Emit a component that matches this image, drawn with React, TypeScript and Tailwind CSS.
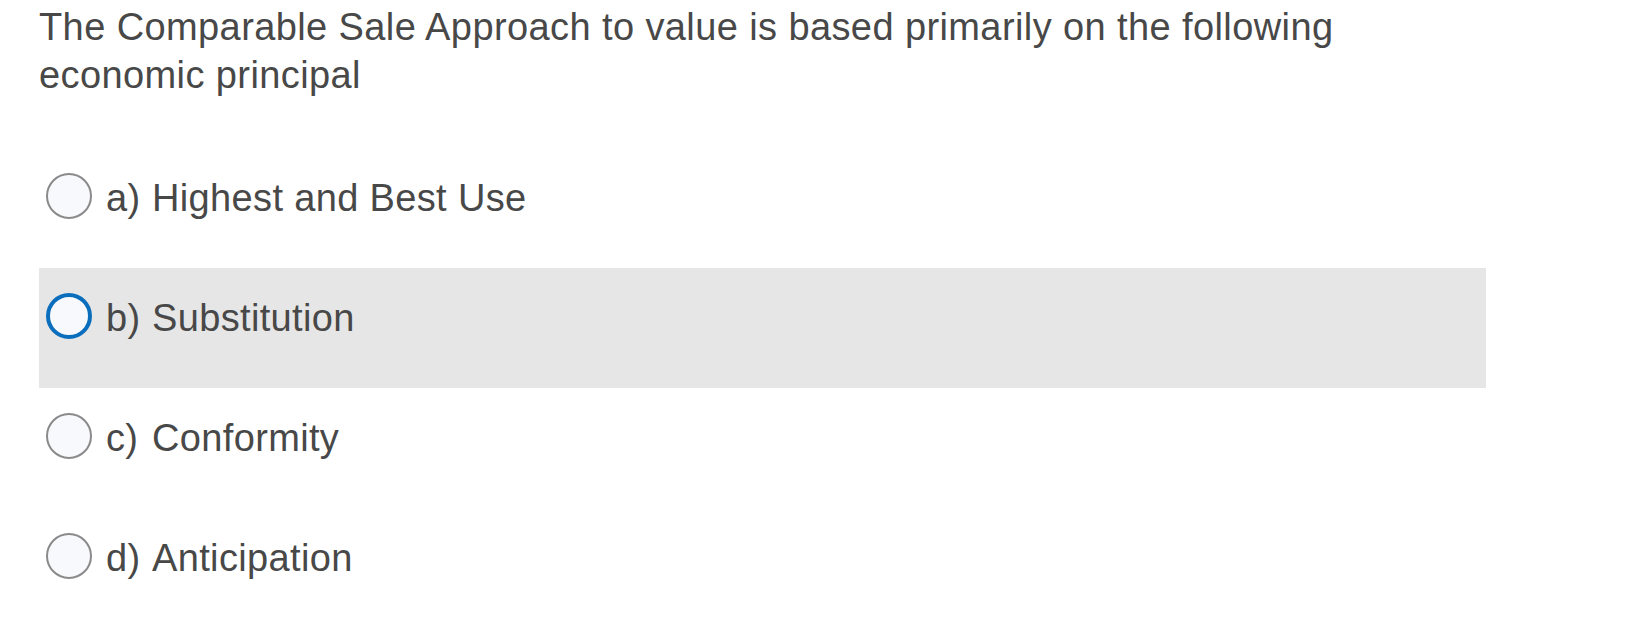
import { useState } from 'react';

const options = [
  { key: 'a)', text: 'Highest and Best Use' },
  { key: 'b)', text: 'Substitution' },
  { key: 'c)', text: 'Conformity' },
  { key: 'd)', text: 'Anticipation' },
];

export default function App() {
  const [hovered] = useState(1);

  return (
    <div
      className="min-h-screen bg-white pl-[39px] text-[#484848]"
      style={{ fontFamily: '"Liberation Sans", Arial, Helvetica, sans-serif' }}
    >
      <h1 className="w-[1340px] pt-[3px] text-[38px] leading-[48px] tracking-[0.4px] font-normal">
        The Comparable Sale Approach to value is based primarily on the following
        economic principal
      </h1>

      <div className="mt-[49px] w-[1447px]">
        {options.map((opt, i) => {
          const active = i === hovered;
          return (
            <label
              key={opt.key}
              className={`flex h-[120px] cursor-pointer items-start pt-[25px] ${
                active ? 'bg-[#e6e6e6]' : ''
              }`}
            >
              <span
                className={`ml-[7px] h-[46px] w-[46px] shrink-0 rounded-full bg-[#f7f9fd] ${
                  active ? 'border-4 border-[#0a6ebd]' : 'border-2 border-[#8a8a8a]'
                }`}
              />
              <span className="mt-[3px] ml-[14px] flex text-[38px] leading-[45px] tracking-[0.35px]">
                <span className="w-[46px]">{opt.key}</span>
                <span>{opt.text}</span>
              </span>
            </label>
          );
        })}
      </div>
    </div>
  );
}
